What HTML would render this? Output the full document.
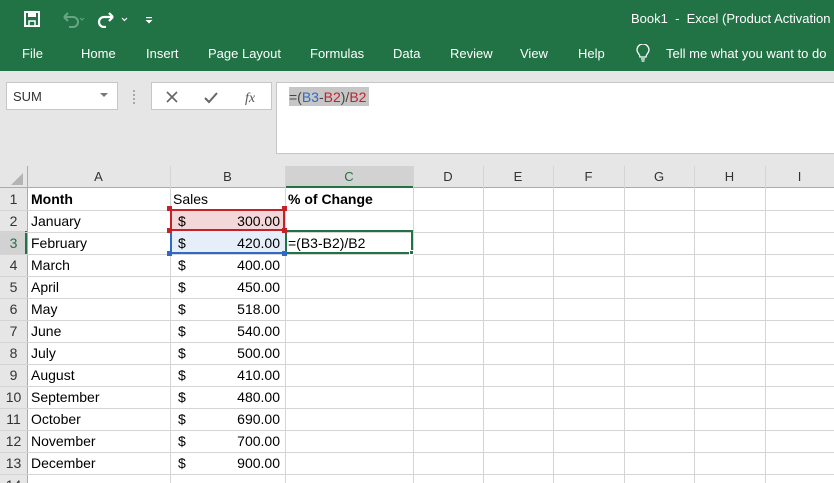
<!DOCTYPE html>
<html style="width:834px;height:483px;overflow:hidden"><head><meta charset="utf-8"><style>
*{margin:0;padding:0;box-sizing:border-box}
body{width:834px;height:483px;overflow:hidden;background:#e6e6e6;font-family:"Liberation Sans",sans-serif;position:relative}
.a{position:absolute}
.g{background:#217346;left:0;top:0;width:834px;height:71px}
.w{color:#fff;font-size:13px}
.cell{position:absolute;font-size:14px;color:#000;line-height:22px;white-space:nowrap}
.vl{position:absolute;width:1px;background:#d4d4d4}
.hl{position:absolute;height:1px;background:#d4d4d4}
.ch{position:absolute;top:166px;height:22px;line-height:22px;text-align:center;font-size:13px;color:#333}
.rh{position:absolute;left:0;width:27px;text-align:center;font-size:14px;color:#333;line-height:22px}
</style></head><body>
<div class="a g"></div>
<svg class="a" style="left:22px;top:10px" width="140" height="18" viewBox="0 0 140 18">
<rect x="3" y="2" width="14" height="14" fill="none" stroke="#fff" stroke-width="2"/>
<rect x="6" y="3" width="8" height="4" fill="#fff"/>
<rect x="7" y="11" width="6" height="5" fill="#217346" stroke="#fff" stroke-width="1.5"/>
<path d="M42 7 h9 a5 5 0 0 1 0 10 h-4 M42 7 l4 -4 M42 7 l4 4" fill="none" stroke="#6aa584" stroke-width="2"/>
<path d="M58 8 l2 2 l2 -2" fill="none" stroke="#6aa584" stroke-width="1"/>
<path d="M91 7 h-9 a5 5 0 0 0 0 10 h2 M91 7 l-4 -4 M91 7 l-4 4" fill="none" stroke="#fff" stroke-width="2.2"/>
<path d="M100 8 l2.5 2.5 l2.5 -2.5" fill="none" stroke="#fff" stroke-width="1.2"/>
<rect x="124" y="7" width="6" height="1.2" fill="#fff"/><path d="M123.5 10 h7 l-3.5 3.5z" fill="#fff"/>
</svg>
<div class="a w" style="left:631px;top:11px;font-size:13px">Book1&nbsp; - &nbsp;Excel (Product Activation</div>
<div class="a w" style="left:22px;top:46px">File</div>
<div class="a w" style="left:81px;top:46px">Home</div>
<div class="a w" style="left:146px;top:46px">Insert</div>
<div class="a w" style="left:208px;top:46px">Page Layout</div>
<div class="a w" style="left:310px;top:46px">Formulas</div>
<div class="a w" style="left:393px;top:46px">Data</div>
<div class="a w" style="left:450px;top:46px">Review</div>
<div class="a w" style="left:520px;top:46px">View</div>
<div class="a w" style="left:578px;top:46px">Help</div>
<svg class="a" style="left:636px;top:44px" width="14" height="20" viewBox="0 0 14 20"><path d="M4 13 C4 10 1 9 1 6 a6 6 0 0 1 12 0 c0 3 -3 4 -3 7z M5 15 h4 M5.5 17 h3" fill="none" stroke="#fff" stroke-width="1.3"/></svg>
<div class="a w" style="left:666px;top:46px">Tell me what you want to do</div>
<div class="a" style="left:6px;top:82px;width:112px;height:28px;background:#fff;border:1px solid #c6c6c6"></div>
<div class="a" style="left:13px;top:89px;font-size:13px;color:#333">SUM</div>
<svg class="a" style="left:100px;top:93px" width="10" height="6"><path d="M0 0h8l-4 4z" fill="#777"/></svg>
<div class="a" style="left:133px;top:90px;width:2px;height:14px;border-left:2px dotted #aaa"></div>
<div class="a" style="left:151px;top:82px;width:121px;height:28px;background:#fff;border:1px solid #c6c6c6"></div>
<svg class="a" style="left:165px;top:89px" width="100" height="16"><path d="M2 3l10 10M12 3L2 13" stroke="#666" stroke-width="1.6"/><path d="M40 9l4 4l8-9" fill="none" stroke="#666" stroke-width="2"/><text x="80" y="13" font-family="Liberation Serif" font-style="italic" font-size="14" fill="#555">fx</text></svg>
<div class="a" style="left:276px;top:82px;width:560px;height:72px;background:#fff;border:1px solid #c6c6c6"></div>
<div class="a" style="left:289px;top:87px;height:19px;width:80px;background:#c6c6c6"></div>
<div class="a" style="left:289px;top:88px;font-size:14px;color:#444;line-height:18px">=(<span style="color:#2e6bc6">B3</span>-<span style="color:#c3222a">B2</span>)/<span style="color:#c3222a">B2</span></div>
<div class="a" style="left:27px;top:188px;width:807px;height:295px;background:#fff"></div>
<div class="a" style="left:0;top:166px;width:834px;height:22px;background:#e6e6e6;border-bottom:1px solid #ababab"></div>
<svg class="a" style="left:10px;top:172px" width="14" height="14"><path d="M13 1V13H1z" fill="#b4b4b4"/></svg>
<div class="a" style="left:285px;top:166px;width:128px;height:22px;background:#d2d2d2;border-bottom:2px solid #217346"></div>
<div class="a" style="left:0;top:231px;width:27px;height:23px;background:#d2d2d2;border-right:2px solid #217346"></div>
<div class="ch" style="left:27px;width:143px">A</div>
<div class="ch" style="left:170px;width:115px">B</div>
<div class="ch" style="left:285px;width:128px;color:#217346">C</div>
<div class="ch" style="left:413px;width:70px">D</div>
<div class="ch" style="left:483px;width:70px">E</div>
<div class="ch" style="left:553px;width:71px">F</div>
<div class="ch" style="left:624px;width:70px">G</div>
<div class="ch" style="left:694px;width:71px">H</div>
<div class="ch" style="left:765px;width:69px">I</div>
<div class="vl" style="left:27px;top:166px;height:317px;background:#ababab"></div>
<div class="vl" style="left:170px;top:166px;height:317px"></div>
<div class="vl" style="left:285px;top:166px;height:317px"></div>
<div class="vl" style="left:413px;top:166px;height:317px"></div>
<div class="vl" style="left:483px;top:166px;height:317px"></div>
<div class="vl" style="left:553px;top:166px;height:317px"></div>
<div class="vl" style="left:624px;top:166px;height:317px"></div>
<div class="vl" style="left:694px;top:166px;height:317px"></div>
<div class="vl" style="left:765px;top:166px;height:317px"></div>
<div class="hl" style="left:0;top:210px;width:834px"></div>
<div class="hl" style="left:0;top:232px;width:834px"></div>
<div class="hl" style="left:0;top:254px;width:834px"></div>
<div class="hl" style="left:0;top:276px;width:834px"></div>
<div class="hl" style="left:0;top:298px;width:834px"></div>
<div class="hl" style="left:0;top:320px;width:834px"></div>
<div class="hl" style="left:0;top:342px;width:834px"></div>
<div class="hl" style="left:0;top:364px;width:834px"></div>
<div class="hl" style="left:0;top:386px;width:834px"></div>
<div class="hl" style="left:0;top:408px;width:834px"></div>
<div class="hl" style="left:0;top:430px;width:834px"></div>
<div class="hl" style="left:0;top:452px;width:834px"></div>
<div class="hl" style="left:0;top:474px;width:834px"></div>
<div class="a" style="left:170px;top:209px;width:115px;height:22px;background:#f4d7d8;border:2px solid #c3222a"></div>
<div class="a" style="left:170px;top:231px;width:115px;height:23px;background:#e6eef9;border-left:2px solid #2e6bc6;border-bottom:2px solid #2e6bc6"></div>
<div class="a" style="left:285px;top:230px;width:128px;height:24px;border:2px solid #217346"></div>
<div class="a" style="left:409px;top:250px;width:5px;height:5px;background:#217346;border:1px solid #fff"></div>
<div class="a" style="left:167px;top:206px;width:5px;height:5px;background:#c3222a"></div>
<div class="a" style="left:282px;top:206px;width:5px;height:5px;background:#c3222a"></div>
<div class="a" style="left:167px;top:228px;width:5px;height:5px;background:#c3222a"></div>
<div class="a" style="left:282px;top:228px;width:5px;height:5px;background:#c3222a"></div>
<div class="a" style="left:167px;top:251px;width:5px;height:5px;background:#2e6bc6"></div>
<div class="a" style="left:282px;top:251px;width:5px;height:5px;background:#2e6bc6"></div>
<div class="rh" style="top:188px">1</div><div class="cell" style="left:31px;top:188px;font-weight:bold">Month</div><div class="cell" style="left:173px;top:188px">Sales</div><div class="cell" style="left:288px;top:188px;font-weight:bold">% of Change</div>
<div class="rh" style="top:210px">2</div><div class="cell" style="left:31px;top:210px">January</div><div class="cell" style="left:178px;top:210px">$</div><div class="cell" style="left:170px;top:210px;width:110px;text-align:right">300.00</div>
<div class="rh" style="top:232px;color:#217346">3</div><div class="cell" style="left:31px;top:232px">February</div><div class="cell" style="left:178px;top:232px">$</div><div class="cell" style="left:170px;top:232px;width:110px;text-align:right">420.00</div><div class="cell" style="left:288px;top:232px">=(B3-B2)/B2</div>
<div class="rh" style="top:254px">4</div><div class="cell" style="left:31px;top:254px">March</div><div class="cell" style="left:178px;top:254px">$</div><div class="cell" style="left:170px;top:254px;width:110px;text-align:right">400.00</div>
<div class="rh" style="top:276px">5</div><div class="cell" style="left:31px;top:276px">April</div><div class="cell" style="left:178px;top:276px">$</div><div class="cell" style="left:170px;top:276px;width:110px;text-align:right">450.00</div>
<div class="rh" style="top:298px">6</div><div class="cell" style="left:31px;top:298px">May</div><div class="cell" style="left:178px;top:298px">$</div><div class="cell" style="left:170px;top:298px;width:110px;text-align:right">518.00</div>
<div class="rh" style="top:320px">7</div><div class="cell" style="left:31px;top:320px">June</div><div class="cell" style="left:178px;top:320px">$</div><div class="cell" style="left:170px;top:320px;width:110px;text-align:right">540.00</div>
<div class="rh" style="top:342px">8</div><div class="cell" style="left:31px;top:342px">July</div><div class="cell" style="left:178px;top:342px">$</div><div class="cell" style="left:170px;top:342px;width:110px;text-align:right">500.00</div>
<div class="rh" style="top:364px">9</div><div class="cell" style="left:31px;top:364px">August</div><div class="cell" style="left:178px;top:364px">$</div><div class="cell" style="left:170px;top:364px;width:110px;text-align:right">410.00</div>
<div class="rh" style="top:386px">10</div><div class="cell" style="left:31px;top:386px">September</div><div class="cell" style="left:178px;top:386px">$</div><div class="cell" style="left:170px;top:386px;width:110px;text-align:right">480.00</div>
<div class="rh" style="top:408px">11</div><div class="cell" style="left:31px;top:408px">October</div><div class="cell" style="left:178px;top:408px">$</div><div class="cell" style="left:170px;top:408px;width:110px;text-align:right">690.00</div>
<div class="rh" style="top:430px">12</div><div class="cell" style="left:31px;top:430px">November</div><div class="cell" style="left:178px;top:430px">$</div><div class="cell" style="left:170px;top:430px;width:110px;text-align:right">700.00</div>
<div class="rh" style="top:452px">13</div><div class="cell" style="left:31px;top:452px">December</div><div class="cell" style="left:178px;top:452px">$</div><div class="cell" style="left:170px;top:452px;width:110px;text-align:right">900.00</div>
<div class="rh" style="top:474px;height:9px;overflow:hidden">14</div>
</body></html>
